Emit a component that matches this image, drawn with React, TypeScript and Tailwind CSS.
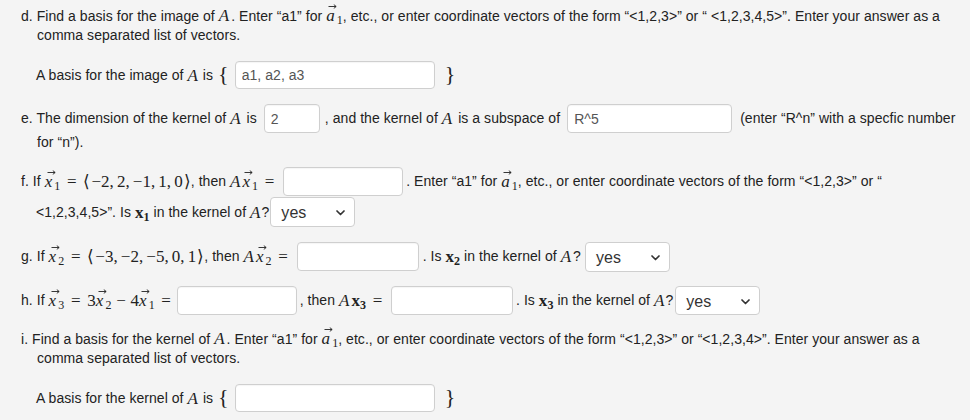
import React from "react";

const SERIF = "font-['Liberation_Serif',serif]";

const M = ({ children, tight }: { children: React.ReactNode; tight?: boolean }) => (
  <span className={`${SERIF} italic text-[17px] leading-none ${tight ? "pr-[1px]" : "pr-[2px]"}`}>{children}</span>
);

const R = ({ children }: { children: React.ReactNode }) => (
  <span className={`${SERIF} not-italic text-[17px] leading-none`}>{children}</span>
);

const Sub = ({ children, bold }: { children: React.ReactNode; bold?: boolean }) => (
  <span
    className={`relative top-[3px] ${SERIF} not-italic text-[12px] leading-none ${bold ? "font-bold" : ""}`}
  >
    {children}
  </span>
);

const Arrow = () => (
  <svg className="absolute left-[2px] top-[-3px]" width="9" height="5" viewBox="0 0 9 5" fill="none">
    <path d="M0.5 2.5H8" stroke="#222" strokeWidth="0.9" />
    <path d="M5.8 0.6L8.2 2.5L5.8 4.4" stroke="#222" strokeWidth="0.9" />
  </svg>
);

const Vec = ({ v, n }: { v: string; n: string }) => (
  <span className={`${SERIF} text-[17px] leading-none whitespace-nowrap`}>
    <span className="relative inline-block indent-0 italic pr-[2px]">
      {v}
      <Arrow />
    </span>
    <Sub>{n}</Sub>
  </span>
);

const BoldX = ({ n }: { n: string }) => (
  <span className={`${SERIF} text-[17px] leading-none font-bold not-italic whitespace-nowrap`}>
    x<Sub bold>{n}</Sub>
  </span>
);

const Eq = () => (
  <span className={`${SERIF} mx-[5px] inline-block w-[13px] text-center text-[17px] leading-none`}>=</span>
);

const BinMinus = () => (
  <span className={`${SERIF} mx-[4px] inline-block w-[11px] text-center text-[17px] leading-none`}>−</span>
);

const Tuple = ({ items }: { items: string[] }) => (
  <span className={`${SERIF} text-[17px] leading-none whitespace-nowrap`}>
    <span className="pr-[1px]">⟨</span>
    {items.map((it, i) => (
      <React.Fragment key={i}>
        {it.startsWith("-") ? "−" + it.slice(1) : it}
        {i < items.length - 1 ? <span className="mr-[3px]">,</span> : null}
      </React.Fragment>
    ))}
    <span className="pl-[1px]">⟩</span>
  </span>
);

const Input = ({ w, value, className = "" }: { w: string; value?: string; className?: string }) => (
  <input
    readOnly
    defaultValue={value}
    className={`${w} ${className} h-[29px] shrink-0 rounded-[4px] border border-[#cfcfcf] bg-white px-[6px] font-['Liberation_Sans',Arial,sans-serif] text-[14px] text-[#555] shadow-[inset_0_1px_1px_rgba(0,0,0,0.04)] outline-none`}
  />
);

const Select = ({ className = "" }: { className?: string }) => (
  <div
    className={`${className} relative flex h-[30px] w-[85px] shrink-0 items-center rounded-[4px] border border-[#cfcfcf] bg-white pl-[10px] font-['Liberation_Sans',Arial,sans-serif] text-[16px] text-[#333]`}
  >
    <span className="relative top-[1px]">yes</span>
    <svg className="absolute right-[9px] top-[12px]" width="9" height="6" viewBox="0 0 9 6" fill="none">
      <path d="M1 1L4.5 4.5L8 1" stroke="#333" strokeWidth="1.7" strokeLinecap="round" strokeLinejoin="round" />
    </svg>
  </div>
);

const Brace = ({ children }: { children: React.ReactNode }) => (
  <span className={`${SERIF} text-[22px] leading-none text-[#222]`}>{children}</span>
);

export default function App() {
  return (
    <div className="h-[420px] w-[970px] overflow-hidden bg-[#f4f4f4] pt-[7px] font-['Liberation_Sans',Arial,sans-serif] text-[14px] text-[#222] tracking-[0.05px]">
      {/* d */}
      <p className="pl-[37px] -indent-[16px] leading-[19px] whitespace-nowrap">
        d. Find a basis for the image of <M>A</M>. Enter “a1” for <Vec v="a" n="1" />, etc., or enter coordinate
        vectors of the form “&lt;1,2,3&gt;” or “ &lt;1,2,3,4,5&gt;”. Enter your answer as a
        <br />
        comma separated list of vectors.
      </p>
      <div className="mt-[16px] flex h-[28px] items-center pl-[36px] whitespace-pre">
        <span>A basis for the image of </span>
        <M tight>A</M>
        <span> is</span>
        <span className="ml-[5px]"><Brace>{"{"}</Brace></span>
        <Input w="w-[200px]" value="a1, a2, a3" className="ml-[6px] !h-[28px]" />
        <span className="ml-[10px]"><Brace>{"}"}</Brace></span>
      </div>

      {/* e */}
      <div className="mt-[15px] flex h-[29px] items-center pl-[21px] whitespace-pre">
        <span>e. The dimension of the kernel of </span>
        <M>A</M>
        <span> is</span>
        <Input w="w-[56px]" value="2" className="ml-[7px]" />
        <span className="ml-[5px]">, and the kernel of </span>
        <M>A</M>
        <span> is a subspace of</span>
        <Input w="w-[165px]" value="R^5" className="ml-[7px]" />
        <span className="ml-[8px]">(enter “R^n” with a specfic number</span>
      </div>
      <p className="pl-[37px] leading-[19px]">for “n”).</p>

      {/* f */}
      <div className="mt-[15px] flex h-[29px] items-center pl-[21px] whitespace-pre">
        <span>f. If </span>
        <Vec v="x" n="1" />
        <Eq />
        <Tuple items={["-2", "2", "-1", "1", "0"]} />
        <span>, then </span>
        <M>A</M>
        <Vec v="x" n="1" />
        <Eq />
        <Input w="w-[120px]" className="ml-[2px]" />
        <span className="ml-[3px]">. Enter “a1” for </span>
        <Vec v="a" n="1" />
        <span>, etc., or enter coordinate vectors of the form “&lt;1,2,3&gt;” or “</span>
      </div>
      <div className="mt-[1px] flex h-[30px] items-center pl-[36px] whitespace-pre">
        <span>&lt;1,2,3,4,5&gt;”. Is </span>
        <BoldX n="1" />
        <span> in the kernel of </span>
        <M tight>A</M>
        <span>?</span>
        <Select className="ml-[1px]" />
      </div>

      {/* g */}
      <div className="mt-[15px] flex h-[29px] items-center pl-[21px] whitespace-pre">
        <span>g. If </span>
        <Vec v="x" n="2" />
        <Eq />
        <Tuple items={["-3", "-2", "-5", "0", "1"]} />
        <span>, then </span>
        <M>A</M>
        <Vec v="x" n="2" />
        <Eq />
        <Input w="w-[122px]" className="ml-[2px]" />
        <span className="ml-[4px]">. Is </span>
        <BoldX n="2" />
        <span> in the kernel of </span>
        <M>A</M>
        <span>?</span>
        <Select className="ml-[4px]" />
      </div>

      {/* h */}
      <div className="mt-[15px] flex h-[29px] items-center pl-[21px] whitespace-pre">
        <span>h. If </span>
        <Vec v="x" n="3" />
        <Eq />
        <R>3</R>
        <Vec v="x" n="2" />
        <BinMinus />
        <R>4</R>
        <Vec v="x" n="1" />
        <span className={`${SERIF} ml-[5px] mr-[4px] inline-block w-[13px] text-center text-[17px] leading-none`}>=</span>
        <Input w="w-[120px]" />
        <span className="ml-[3px]">, then </span>
        <M>A</M>
        <BoldX n="3" />
        <Eq />
        <Input w="w-[122px]" className="ml-[2px]" />
        <span className="ml-[3px]">. Is </span>
        <BoldX n="3" />
        <span> in the kernel of </span>
        <M tight>A</M>
        <span>?</span>
        <Select className="ml-[2px] !h-[29px]" />
      </div>

      {/* i */}
      <p className="mt-[15px] pl-[37px] -indent-[16px] leading-[19px] whitespace-nowrap">
        i. Find a basis for the kernel of <M>A</M>. Enter “a1” for <Vec v="a" n="1" />, etc., or enter coordinate
        vectors of the form “&lt;1,2,3&gt;” or “&lt;1,2,3,4&gt;”. Enter your answer as a
        <br />
        comma separated list of vectors.
      </p>
      <div className="mt-[16px] flex h-[28px] items-center pl-[36px] whitespace-pre">
        <span>A basis for the kernel of </span>
        <M tight>A</M>
        <span> is</span>
        <span className="ml-[5px]"><Brace>{"{"}</Brace></span>
        <Input w="w-[200px]" className="ml-[6px] !h-[28px]" />
        <span className="ml-[10px]"><Brace>{"}"}</Brace></span>
      </div>
    </div>
  );
}
